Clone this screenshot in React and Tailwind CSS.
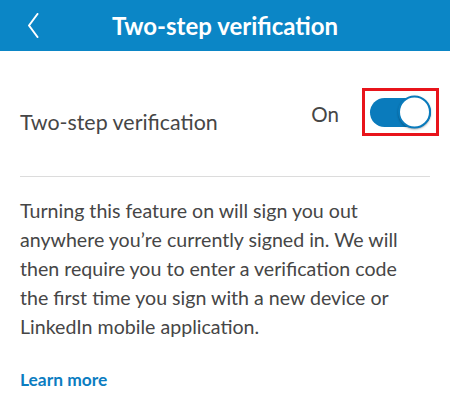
export default function App() {
  return (
    <div className="w-[450px] h-[404px] bg-white overflow-hidden" style={{ fontFamily: "'Lato', 'Open Sans', sans-serif" }}>
      <header className="relative h-[51px] bg-[#0b86c6] flex items-center justify-center">
        <svg className="absolute left-[27px] top-[13px]" width="12" height="25" viewBox="0 0 12 25" fill="none">
          <path d="M10.5 1 L2 12.5 L10.5 24" stroke="white" strokeWidth="2" strokeLinecap="round" strokeLinejoin="round" />
        </svg>
        <h1 className="text-white font-bold text-[24px] leading-none">Two-step verification</h1>
      </header>
      <div className="px-5">
        <div className="h-[126px] flex items-start border-b border-[#dcdcdc]">
          <span className="mt-[58px] text-[21.4px] leading-[26px] text-[#464646]">Two-step verification</span>
          <div className="ml-auto mr-[-9px] mt-[37px] flex items-center">
            <span className="text-[20.5px] leading-[24px] text-[#464646] mr-[23px] mt-[3px]">On</span>
            <div className="w-[77px] h-[48px] border-[3px] border-[#e8141b] flex items-center justify-center">
              <div className="relative w-[61px] h-[29px] rounded-full bg-[#0a7bbc]">
                <div className="absolute right-0 top-1/2 -translate-y-1/2 w-[33px] h-[33px] rounded-full bg-white border-[2px] border-[#0a7bbc] shadow-[0_1px_2px_rgba(0,0,0,0.3)]" />
              </div>
            </div>
          </div>
        </div>
        <p className="mt-[19px] text-[19.6px] leading-[29px] text-[#464646]">
          Turning this feature on will sign you out anywhere you’re currently signed in. We will then require you to enter a verification code the first time you sign with a new device or LinkedIn mobile application.
        </p>
        <a className="block mt-[27px] text-[17.4px] leading-[24px] font-bold text-[#0b7dc1]">Learn more</a>
      </div>
    </div>
  );
}
